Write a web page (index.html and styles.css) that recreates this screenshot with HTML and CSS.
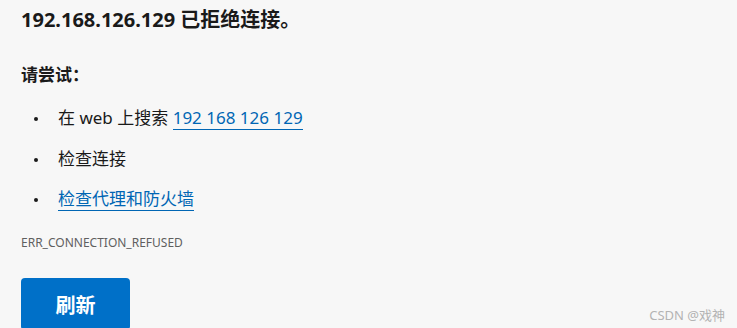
FILE: index.html
```html
<!DOCTYPE html>
<html>
<head>
    <link rel="stylesheet" href="styles.css">
</head>
<body>
    <div class="page">
        <h1 class="err-title">192.168.126.129 已拒绝连接。</h1>
        <p class="try-title">请尝试：</p>
        <ul class="suggestions">
            <li>在 web 上搜索 <a href="#">192 168 126 129</a></li>
            <li>检查连接</li>
            <li><a href="#">检查代理和防火墙</a></li>
        </ul>
        <div class="err-code">ERR_CONNECTION_REFUSED</div>
        <button class="reload-btn">刷新</button>
    </div>
    <div class="watermark">CSDN @戏神</div>
</body>
</html>
```

FILE: styles.css
```css
html, body {
    margin: 0;
    height: 100%;
    overflow: hidden;
}

body {
    background: #f7f7f7;
    color: #1a1a1a;
    font-family: "Noto Sans", "Noto Sans CJK SC", sans-serif;
    position: relative;
}

.page {
    padding: 8px 21px 0;
}

.err-title {
    font-size: 20px;
    font-weight: bold;
    margin: 0;
    line-height: 24px;
}

.try-title {
    font-size: 17px;
    font-weight: bold;
    margin: 31px 0 0;
    line-height: 24px;
}

.suggestions {
    list-style: none;
    margin: 19px 0 0;
    padding: 0;
}

.suggestions li {
    font-size: 17px;
    line-height: 24px;
    margin-bottom: 16.5px;
    padding-left: 37px;
    position: relative;
}

.suggestions li:last-child {
    margin-bottom: 0;
}

.suggestions li::before {
    content: "";
    position: absolute;
    left: 13px;
    top: 11px;
    width: 4px;
    height: 4px;
    border-radius: 50%;
    background: #1a1a1a;
}

.suggestions a {
    color: #0066b4;
    text-decoration: none;
    border-bottom: 1px solid #0066b4;
}

.err-code {
    font-size: 12px;
    color: #5f5f5f;
    margin-top: 24px;
    line-height: 16px;
}

.reload-btn {
    display: block;
    margin-top: 27px;
    width: 109px;
    height: 52px;
    background: #0070c8;
    color: #fff;
    border: none;
    border-radius: 4px;
    font-family: "Noto Sans CJK SC", sans-serif;
    font-size: 20px;
    font-weight: bold;
}

.watermark {
    position: absolute;
    right: 12px;
    bottom: 4px;
    font-size: 13px;
    color: #b3b3b3;
    font-family: "Noto Sans", "Noto Sans CJK SC", sans-serif;
}
```
